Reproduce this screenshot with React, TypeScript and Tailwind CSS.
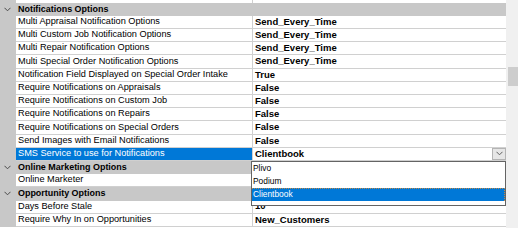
import React from 'react';

type Row = { cat?: boolean; name: string; value?: string; selected?: boolean };

const rows: Row[] = [
  { cat: true, name: 'Notifications Options' },
  { name: 'Multi Appraisal Notification Options', value: 'Send_Every_Time' },
  { name: 'Multi Custom Job Notification Options', value: 'Send_Every_Time' },
  { name: 'Multi Repair Notification Options', value: 'Send_Every_Time' },
  { name: 'Multi Special Order Notification Options', value: 'Send_Every_Time' },
  { name: 'Notification Field Displayed on Special Order Intake', value: 'True' },
  { name: 'Require Notifications on Appraisals', value: 'False' },
  { name: 'Require Notifications on Custom Job', value: 'False' },
  { name: 'Require Notifications on Repairs', value: 'False' },
  { name: 'Require Notifications on Special Orders', value: 'False' },
  { name: 'Send Images with Email Notifications', value: 'False' },
  { name: 'SMS Service to use for Notifications', value: 'Clientbook', selected: true },
  { cat: true, name: 'Online Marketing Options' },
  { name: 'Online Marketer', value: '' },
  { cat: true, name: 'Opportunity Options' },
  { name: 'Days Before Stale', value: '10' },
  { name: 'Require Why In on Opportunities', value: 'New_Customers' },
];

const Chevron = ({ color = '#4a4a4a' }: { color?: string }) => (
  <svg width="7" height="5" viewBox="0 0 7 5">
    <polyline points="0.5,0.8 3.5,3.8 6.5,0.8" fill="none" stroke={color} strokeWidth="1" />
  </svg>
);

const PropRow = ({ row }: { row: Row }) => {
  if (row.cat) {
    return (
      <div className="flex h-[13.2px] shrink-0 bg-[#c8c8c8]">
        <div className="w-4 flex items-center pl-[4px]">
          <Chevron />
        </div>
        <div className="pl-[2px] flex items-center font-bold text-[8.95px] text-black whitespace-nowrap">
          {row.name}
        </div>
      </div>
    );
  }
  return (
    <div className="flex h-[13.2px] shrink-0">
      <div className="w-4 bg-[#c8c8c8]" />
      <div
        className={`w-[236px] border-b border-[#d0d0d0] pl-[2px] flex items-center text-[9.2px] whitespace-nowrap overflow-hidden ${
          row.selected ? 'bg-[#0078d7] text-white' : 'text-black'
        }`}
      >
        {row.name}
      </div>
      <div className="w-px bg-[#d0d0d0]" />
      <div className="flex-1 border-b border-[#d0d0d0] pl-[2px] flex items-center font-bold text-[9.5px] text-black whitespace-nowrap">
        {row.value}
        {row.selected && (
          <div className="ml-auto self-start w-[14px] h-[12px] border border-[#b4b4b4] bg-[#e6e6e6] flex items-center justify-center">
            <Chevron color="#606060" />
          </div>
        )}
      </div>
    </div>
  );
};

export default function App() {
  return (
    <div className="w-[518px] h-[228px] overflow-hidden flex bg-white font-['Liberation_Sans',Arial,sans-serif]">
      <div className="relative w-[506px] flex flex-col">
        <div className="flex h-[2.7px] shrink-0">
          <div className="w-4 bg-[#c8c8c8]" />
          <div className="w-[236px]" />
          <div className="w-px bg-[#d0d0d0]" />
          <div className="flex-1" />
        </div>
        {rows.map((r, i) => (
          <PropRow key={i} row={r} />
        ))}

        <div className="absolute left-[251px] top-[160.5px] w-[255px] h-[45px] border border-[#646464] bg-white flex flex-col">
          {['Plivo', 'Podium', 'Clientbook'].map(item => (
            <div
              key={item}
              className={`h-[13px] shrink-0 pl-[1px] flex items-center text-[8.4px] whitespace-nowrap ${
                item === 'Clientbook'
                  ? 'bg-[#0078d7] text-white border-t border-r border-dotted border-[#c08a4a]'
                  : 'text-black'
              }`}
            >
              {item}
            </div>
          ))}
        </div>
      </div>

      <div className="w-[12px] bg-[#f0f0f0] pt-[67px] pl-[2px]">
        <div className="h-[19px] bg-[#cdcdcd]" />
      </div>
    </div>
  );
}
